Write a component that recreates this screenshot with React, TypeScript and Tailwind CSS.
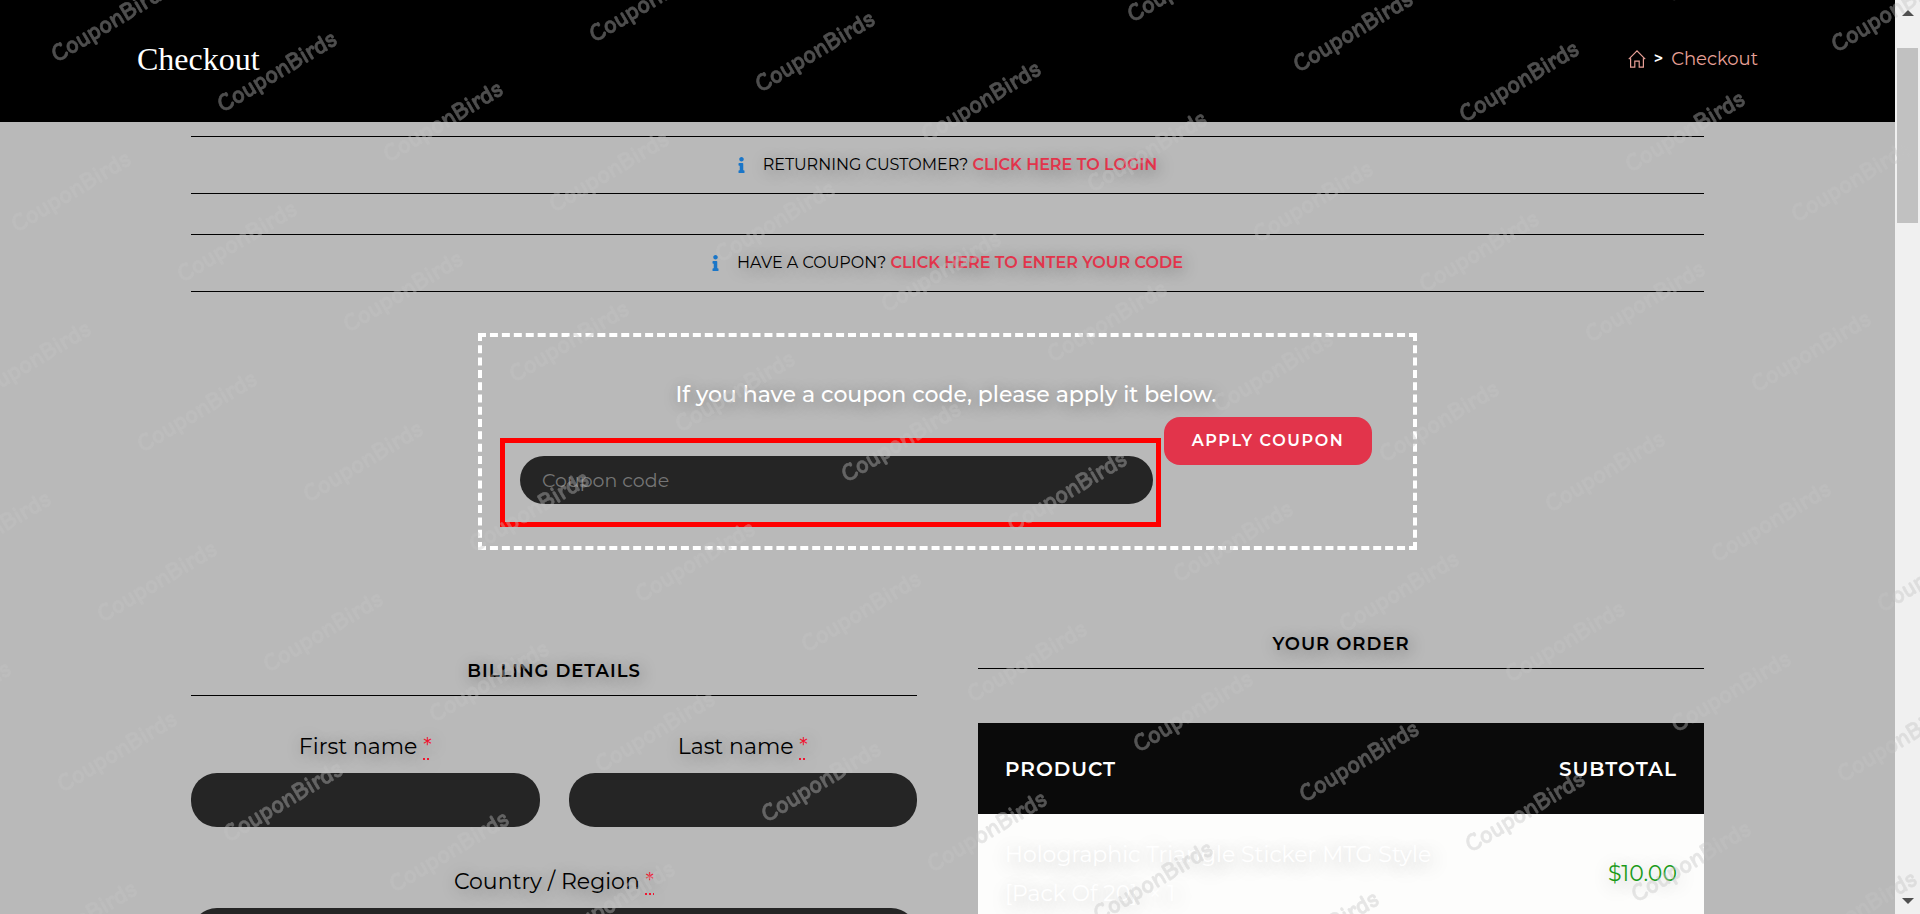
import React from "react";
import { FaInfo } from "react-icons/fa";

const softShadow = "[text-shadow:2px_3px_16px_rgba(0,0,0,0.4)]";

function Watermarks() {
  const marks: { x: number; y: number }[] = [];
  for (let row = -3; row < 8; row++) {
    for (let col = -4; col < 15; col++) {
      const x = 57 + col * 166 - row * 40;
      const y = 63 + col * 50 + row * 170;
      if (x > -120 && x < 1915 && y > 0 && y < 980) marks.push({ x, y });
    }
  }
  return (
    <svg
      aria-hidden="true"
      className="pointer-events-none absolute inset-0 z-20 h-full w-full overflow-hidden fill-[#c3c3c3] stroke-[#c3c3c3] font-['Comic_Sans_MS','Comic_Neue',Lato,sans-serif] text-[25px] font-bold opacity-40"
    >
      {marks.map((m) => (
        <text key={`${m.x}-${m.y}`} strokeWidth="0.6" transform={`translate(${m.x} ${m.y}) rotate(-31)`}>
          CouponBirds
        </text>
      ))}
    </svg>
  );
}

function HomeIcon() {
  return (
    <svg viewBox="0 0 18 18" className="size-[18px] fill-none stroke-current">
      <path d="M2.6 8.2V17.2H6.8V11.2H11.2V17.2H15.4V8.2M0.8 9.2L9 0.9L17.2 9.2" strokeWidth="1.2" />
    </svg>
  );
}

function Notice({ text, link }: { text: string; link: string }) {
  return (
    <div className={`flex h-[58px] items-center justify-center border-y border-black text-base ${softShadow}`}>
      <FaInfo className="mr-[18px] h-4 w-[7px] text-[#1a76c8]" />
      <p>
        {text}{" "}
        <a href="#" className="font-semibold text-[#e2344b]">
          {link}
        </a>
      </p>
    </div>
  );
}

function Required() {
  return (
    <abbr title="required" className="text-[#f0142f] underline decoration-dotted decoration-2 underline-offset-4">
      *
    </abbr>
  );
}

const label = `mb-[10px] block text-center text-[22px] leading-8 ${softShadow}`;
const field = "block h-[54px] w-full appearance-none rounded-[26px] bg-[#252525] px-5 text-lg text-white outline-none";
const heading = `border-b border-black pb-3 text-center text-lg leading-6 font-semibold tracking-[1px] ${softShadow}`;

export default function App() {
  return (
    <div className="relative flex h-screen overflow-hidden bg-[#b9b9b9] font-[Montserrat,Inter,sans-serif] text-black">
      <div className="min-w-0 flex-1 overflow-hidden">
        <header className="flex h-[122px] items-center justify-between bg-black px-[137px] pb-1">
          <h1 className="font-['Liberation_Serif',serif] text-[32px] text-white">Checkout</h1>
          <nav aria-label="Breadcrumb" className="flex items-center gap-2 text-lg text-[#e8a097]">
            <a href="#" aria-label="Home">
              <HomeIcon />
            </a>
            <span className="text-base font-semibold text-white">&gt;</span>
            <a href="#">Checkout</a>
          </nav>
        </header>

        <main className="px-[191px] pt-[14px]">
          <Notice text="RETURNING CUSTOMER?" link="CLICK HERE TO LOGIN" />
          <div className="h-10" />
          <Notice text="HAVE A COUPON?" link="CLICK HERE TO ENTER YOUR CODE" />

          <form
            onSubmit={(e) => e.preventDefault()}
            className="mx-auto mt-[41px] w-[939px] max-w-full border-4 border-dashed border-white pr-[41px] pb-[42px] pl-[38px]"
          >
            <p className={`mb-[2px] pt-[38px] text-center text-[22px] leading-10 font-medium text-white ${softShadow}`}>
              If you have a coupon code, please apply it below.
            </p>
            <div className="flex items-start gap-[11px]">
              <div className="relative mt-[39px] flex-1">
                <input
                  aria-label="Coupon code"
                  placeholder="Coupon code"
                  className="block h-12 w-full rounded-full bg-[#252525] px-[22px] text-[19px] text-white outline-none placeholder:text-[#757575]"
                />
                <div className="pointer-events-none absolute -top-[18px] -right-2 -bottom-[23px] -left-5 border-[5px] border-[#ff0000]" />
              </div>
              <button className="h-12 w-52 rounded-2xl bg-[#e2344b] text-base font-semibold tracking-widest text-white">
                APPLY COUPON
              </button>
            </div>
          </form>

          <div className="grid grid-cols-2 gap-[61px]">
            <section className="pt-[109px]">
              <h2 className={heading}>BILLING DETAILS</h2>
              <div className="mt-[35px] grid grid-cols-2 gap-x-[29px] gap-y-[39px]">
                <div>
                  <label htmlFor="first-name" className={label}>
                    First name <Required />
                  </label>
                  <input id="first-name" className={field} />
                </div>
                <div>
                  <label htmlFor="last-name" className={label}>
                    Last name <Required />
                  </label>
                  <input id="last-name" className={field} />
                </div>
                <div className="col-span-2">
                  <label htmlFor="country" className={label}>
                    Country / Region <Required />
                  </label>
                  <select id="country" className={field} />
                </div>
              </div>
            </section>

            <section className="pt-[82px]">
              <h2 className={heading}>YOUR ORDER</h2>
              <table className="mt-[54px] w-full bg-[#fdfdfc] text-[22px]">
                <thead>
                  <tr className="h-[91px] bg-[#0a0a0a] text-xl text-white">
                    <th className="px-[27px] text-left font-semibold tracking-[1px]">PRODUCT</th>
                    <th className="px-[27px] text-right font-semibold tracking-[1px]">SUBTOTAL</th>
                  </tr>
                </thead>
                <tbody>
                  <tr className="h-[119px]">
                    <td className="w-[70%] px-[27px] leading-[39px] text-white [text-shadow:2px_4px_20px_rgba(0,0,0,0.3)]">
                      Holographic Triangle Sticker MTG Style [Pack Of 20]&nbsp; × 1
                    </td>
                    <td className="px-[27px] text-right text-[#1a9b1a] [text-shadow:2px_4px_20px_rgba(0,0,0,0.3)]">
                      $10.00
                    </td>
                  </tr>
                </tbody>
              </table>
            </section>
          </div>
        </main>
      </div>

      <div aria-hidden="true" className="flex w-[25px] flex-col items-center bg-[#f0f0f0] pt-[10px] pb-[10px]">
        <svg viewBox="0 0 12 6" className="h-[6px] w-3 fill-[#505050]">
          <path d="M6 0L12 6H0Z" />
        </svg>
        <div className="mt-8 h-[175px] w-[21px] bg-[#c1c1c1]" />
        <svg viewBox="0 0 12 6" className="mt-auto h-[6px] w-3 fill-[#505050]">
          <path d="M0 0H12L6 6Z" />
        </svg>
      </div>
      <Watermarks />
    </div>
  );
}
